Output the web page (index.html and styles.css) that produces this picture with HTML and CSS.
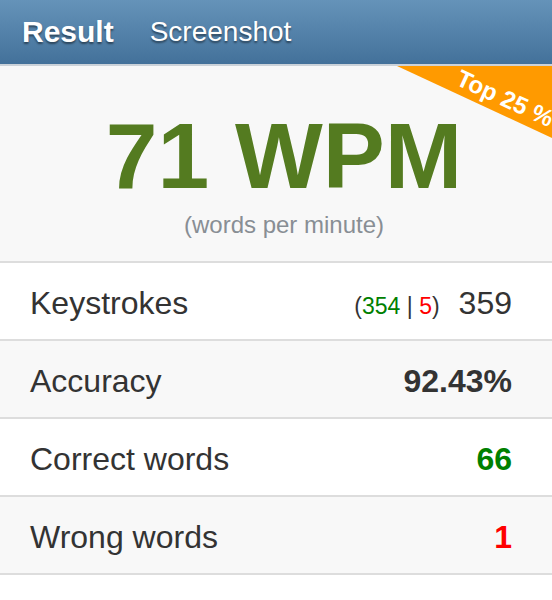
FILE: index.html
```html
<!DOCTYPE html>
<html>
<head>
<meta charset="utf-8">
<link rel="stylesheet" href="styles.css">
</head>
<body>
<header class="topbar">
  <span class="tab tab-active">Result</span>
  <span class="tab">Screenshot</span>
</header>
<section class="score">
  <div class="ribbon"></div>
  <div class="ribbon-text">Top 25 %</div>
  <div class="wpm">71 WPM</div>
  <div class="wpm-sub">(words per minute)</div>
</section>
<div class="stats">
  <div class="row">
    <span class="label">Keystrokes</span>
    <span class="value"><span class="breakdown">(<span class="good">354</span> | <span class="bad">5</span>)</span>359</span>
  </div>
  <div class="row alt">
    <span class="label">Accuracy</span>
    <span class="value strong">92.43%</span>
  </div>
  <div class="row">
    <span class="label">Correct words</span>
    <span class="value strong good">66</span>
  </div>
  <div class="row alt last">
    <span class="label">Wrong words</span>
    <span class="value strong bad">1</span>
  </div>
</div>
</body>
</html>
```

FILE: styles.css
```css
html, body {
  margin: 0;
  padding: 0;
  background: #ffffff;
  font-family: "Liberation Sans", Arial, Helvetica, sans-serif;
  color: #333333;
  overflow: hidden;
}

.topbar {
  height: 64px;
  display: flex;
  align-items: center;
  padding-left: 22px;
  background: linear-gradient(#6593b9, #43719a);
  border-bottom: 2px solid #cbd2d9;
}

.tab {
  color: #ffffff;
  font-size: 28px;
  text-shadow: 0 2px 2px rgba(0, 0, 0, 0.45);
  margin-right: 36px;
}

.tab-active {
  font-weight: bold;
  font-size: 30px;
}

.score {
  position: relative;
  overflow: hidden;
  height: 195px;
  box-sizing: border-box;
  padding: 44px 0 0 16px;
  background: #f8f8f8;
  text-align: center;
}

.ribbon {
  position: absolute;
  top: 0;
  right: 0;
  width: 155px;
  height: 72px;
  background: #ff9a00;
  clip-path: polygon(0 0, 100% 0, 100% 100%);
}

.ribbon-text {
  position: absolute;
  left: 463px;
  top: 0;
  color: #ffffff;
  font-weight: bold;
  font-size: 24px;
  line-height: 24px;
  white-space: nowrap;
  transform: rotate(24.6deg);
  transform-origin: 0 0;
}

.wpm {
  font-size: 93px;
  line-height: 1;
  font-weight: bold;
  color: #547b20;
}

.wpm-sub {
  margin-top: 10px;
  font-size: 24px;
  line-height: 1;
  color: #888e94;
}

.row {
  height: 76px;
  box-sizing: content-box;
  border-top: 2px solid #dddddd;
  display: flex;
  align-items: center;
  justify-content: space-between;
  padding: 0 40px 0 30px;
  background: #ffffff;
}

.row > span {
  padding-top: 4px;
}

.row.alt {
  background: #f8f8f8;
}

.row.last {
  border-bottom: 2px solid #dddddd;
}

.label {
  font-size: 32px;
}

.value {
  font-size: 32px;
}

.value.strong {
  font-weight: bold;
}

.breakdown {
  font-size: 23px;
  margin-right: 19px;
}

.good {
  color: #008000;
}

.bad {
  color: #ff0000;
}
```
